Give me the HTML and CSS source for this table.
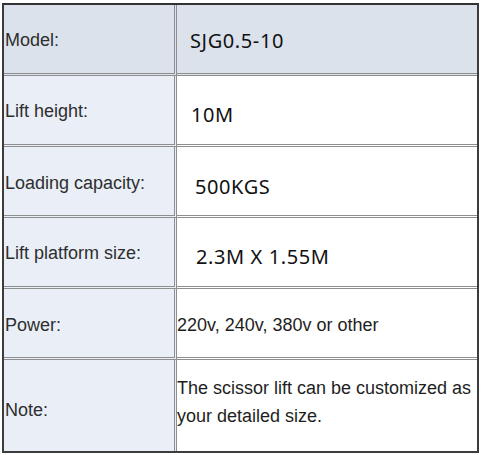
FILE: index.html
```html
<!DOCTYPE html>
<html lang="en">
<head>
<meta charset="utf-8">
<title>Scissor lift specification</title>
<link rel="stylesheet" href="styles.css">
</head>
<body>
<div class="spec">
  <div class="cell label head sh-1">Model:</div>
  <div class="cell value yh head ind-a sh-1">SJG0.5-10</div>

  <div class="cell label sh-1">Lift height:</div>
  <div class="cell value yh ind-b sh-4">10M</div>

  <div class="cell label sh-2">Loading capacity:</div>
  <div class="cell value yh ind-c sh-6">500KGS</div>

  <div class="cell label sh-1">Lift platform size:</div>
  <div class="cell value yh ind-d sh-4">2.3M X 1.55M</div>

  <div class="cell label sh-3">Power:</div>
  <div class="cell value plain sh-3">220v, 240v, 380v or other</div>

  <div class="cell label last sh-10">Note:</div>
  <div class="cell value plain last note">The scissor lift can be customized as your detailed size.</div>
</div>
</body>
</html>
```

FILE: styles.css
```css
html, body {
  margin: 0;
  padding: 0;
  background: #ffffff;
}

body {
  padding: 3px 0 0 2px;
}

.spec {
  box-sizing: border-box;
  width: 477px;
  display: grid;
  grid-template-columns: 173px 1fr;
  grid-template-rows: repeat(5, 71px) 91px;
  border: 2px solid #3c3c3c;
  border-top-color: #333333;
}

.cell {
  box-sizing: border-box;
  display: flex;
  align-items: center;
  border-bottom: 3px double #8e8e8e;
  min-width: 0;
}

.cell.last {
  border-bottom: none;
}

.label {
  border-right: 3px double #8e8e8e;
  background: #e9eef7;
  padding-left: 1px;
  font-family: "Liberation Sans", Arial, sans-serif;
  font-size: 18px;
  line-height: 21px;
  color: #2e2e2e;
}

.value {
  background: #ffffff;
  color: #111111;
}

.head {
  background: #dbe2ec;
}

.yh {
  font-family: "Noto Sans", "Open Sans", sans-serif;
  font-size: 20px;
  line-height: 27px;
  letter-spacing: 0.6px;
}

.plain {
  font-family: "Liberation Sans", Arial, sans-serif;
  font-size: 18px;
  line-height: 21px;
  color: #1e1e1e;
  padding-left: 0;
}

.note {
  line-height: 28px;
  padding-bottom: 8px;
  padding-right: 4px;
}

.ind-a { padding-left: 13px; }
.ind-b { padding-left: 14px; }
.ind-c { padding-left: 18px; }
.ind-d { padding-left: 19px; }

.sh-1 { padding-top: 2px; }
.sh-2 { padding-top: 4px; }
.sh-3 { padding-top: 5px; }
.sh-4 { padding-top: 8px; }
.sh-6 { padding-top: 11px; }
.sh-10 { padding-top: 10px; }
```
